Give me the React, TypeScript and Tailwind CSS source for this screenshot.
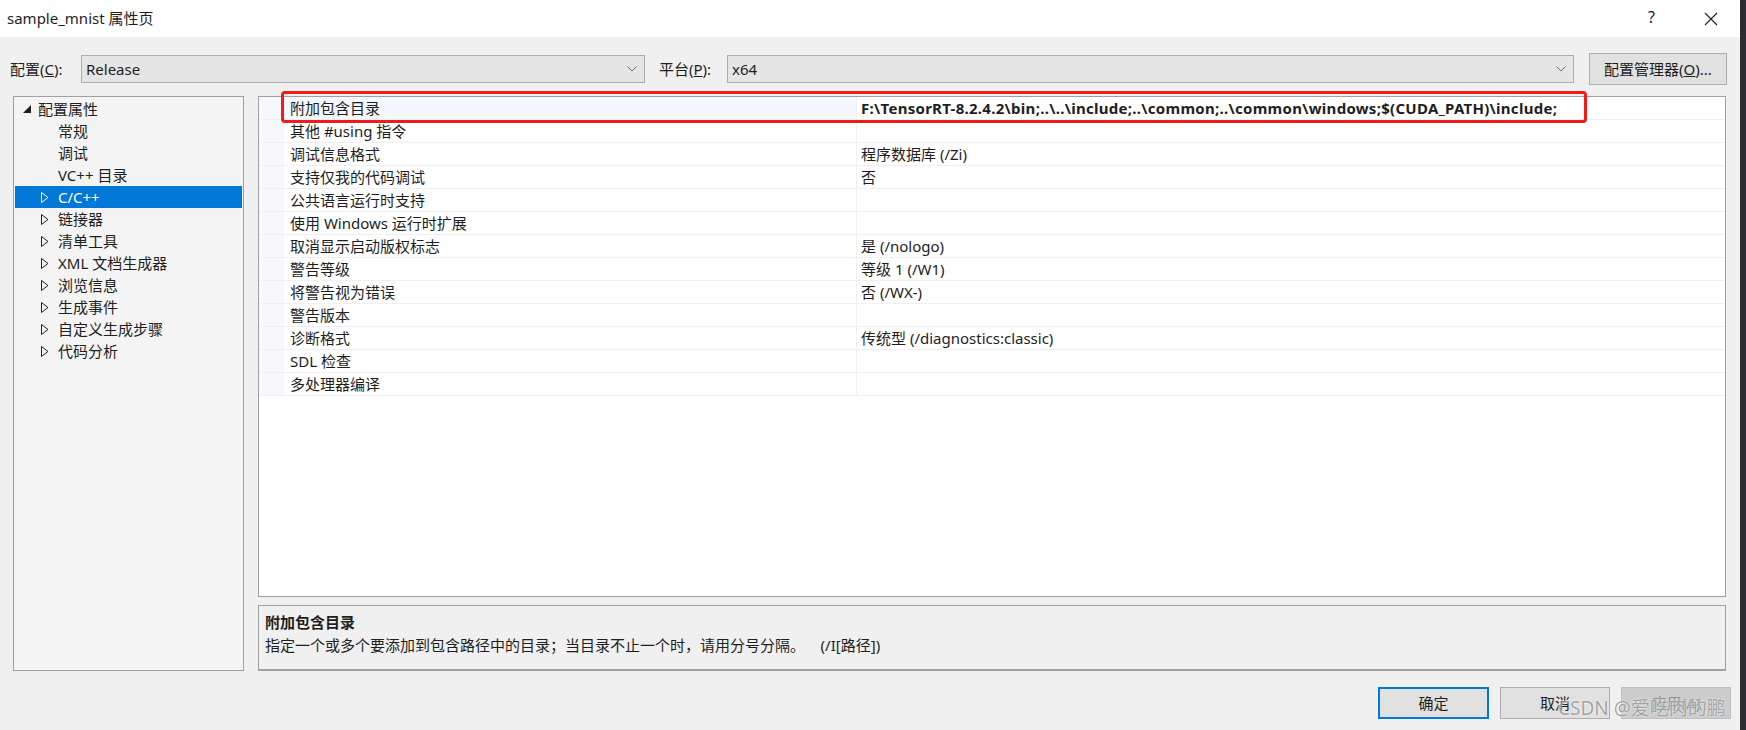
import React from "react"

const font = "font-['Noto_Sans','Noto_Sans_CJK_SC',sans-serif]"

type Prop = { name: string; value?: string }

const props: Prop[] = [
  { name: "附加包含目录", value: "F:\\TensorRT-8.2.4.2\\bin;..\\..\\include;..\\common;..\\common\\windows;$(CUDA_PATH)\\include;" },
  { name: "其他 #using 指令" },
  { name: "调试信息格式", value: "程序数据库 (/Zi)" },
  { name: "支持仅我的代码调试", value: "否" },
  { name: "公共语言运行时支持" },
  { name: "使用 Windows 运行时扩展" },
  { name: "取消显示启动版权标志", value: "是 (/nologo)" },
  { name: "警告等级", value: "等级 1 (/W1)" },
  { name: "将警告视为错误", value: "否 (/WX-)" },
  { name: "警告版本" },
  { name: "诊断格式", value: "传统型 (/diagnostics:classic)" },
  { name: "SDL 检查" },
  { name: "多处理器编译" },
]

const tree = [
  { label: "常规", kind: "leaf" },
  { label: "调试", kind: "leaf" },
  { label: "VC++ 目录", kind: "leaf" },
  { label: "C/C++", kind: "node", selected: true },
  { label: "链接器", kind: "node" },
  { label: "清单工具", kind: "node" },
  { label: "XML 文档生成器", kind: "node" },
  { label: "浏览信息", kind: "node" },
  { label: "生成事件", kind: "node" },
  { label: "自定义生成步骤", kind: "node" },
  { label: "代码分析", kind: "node" },
]

function Chevron() {
  return (
    <svg width="10" height="6" viewBox="0 0 10 6" className="shrink-0">
      <polyline points="0.5,0.5 5,5 9.5,0.5" fill="none" stroke="#6d6d6d" strokeWidth="1" />
    </svg>
  )
}

function Collapsed({ white }: { white?: boolean }) {
  return (
    <svg width="8" height="11" viewBox="0 0 8 11" className="shrink-0">
      <polygon points="0.5,0.5 7,5.5 0.5,10.5" fill="none" stroke={white ? "#ffffff" : "#1e1e1e"} strokeWidth="1" />
    </svg>
  )
}

function Dropdown({ text, width }: { text: string; width: string }) {
  return (
    <div className={`${width} h-[28px] bg-[#e5e5e5] border border-[#adadad] flex items-center justify-between pl-[4px] pr-[7px]`}>
      <span className="text-[15px] text-[#1e1e1e]">{text}</span>
      <Chevron />
    </div>
  )
}

export default function App() {
  return (
    <div className={`w-[1746px] h-[730px] flex overflow-hidden ${font} text-[#1e1e1e]`}>
      <div className="w-[1740px] h-full bg-[#f0f0f0] flex flex-col relative">
        {/* title bar */}
        <div className="h-[37px] bg-white flex items-center pl-[7px] relative">
          <span className="text-[15px] leading-none">sample_mnist 属性页</span>
          <span className="absolute left-[1648px] top-[9px] text-[16px] leading-none">?</span>
          <svg width="14" height="14" viewBox="0 0 14 14" className="absolute left-[1704px] top-[12px]">
            <path d="M1 1 L13 13 M13 1 L1 13" stroke="#1e1e1e" strokeWidth="1.1" />
          </svg>
        </div>

        {/* configuration bar */}
        <div className="mt-[16px] h-[32px] flex items-center pl-[10px]">
          <span className="text-[15px] w-[71px]">配置(<u>C</u>):</span>
          <Dropdown text="Release" width="w-[564px]" />
          <span className="text-[15px] ml-[14px] w-[68px]">平台(<u>P</u>):</span>
          <Dropdown text="x64" width="w-[847px]" />
          <div className="ml-[15px] w-[138px] h-[32px] bg-[#e1e1e1] border border-[#adadad] flex items-center justify-center text-[15px]">
            配置管理器(<u>O</u>)...
          </div>
        </div>

        {/* main area */}
        <div className="mt-[11px] h-[575px] flex pl-[13px] relative">
          <div className="w-[231px] h-full bg-[#f4f4f4] border border-[#a0a0a0] flex flex-col pt-[1px] pl-[1px] pr-[1px]">
            <div className="h-[22px] flex items-center text-[15px]">
              <svg width="8" height="8" viewBox="0 0 8 8" className="ml-[8px] mr-[7px]">
                <polygon points="8,0 8,8 0,8" fill="#1e1e1e" />
              </svg>
              <span>配置属性</span>
            </div>
            {tree.map((t) => (
              <div
                key={t.label}
                className={`h-[22px] flex items-center text-[15px] ${t.selected ? "bg-[#0078d7] text-white" : ""}`}
              >
                <span className="w-[38px] flex justify-end pr-[4px]">
                  {t.kind === "node" && <Collapsed white={t.selected} />}
                </span>
                <span className="ml-[5px]">{t.label}</span>
              </div>
            ))}
          </div>

          <div className="ml-[14px] w-[1468px] flex flex-col">
            <div className="h-[501px] bg-white border border-[#a0a0a0] flex flex-col">
              {props.map((p, i) => (
                <div key={p.name} className="h-[23px] flex border-b border-[#f0f0f0]">
                  <div className="w-[25px] bg-[#f6f8fb]" />
                  <div
                    className={`w-[573px] flex items-center pl-[6px] text-[15px] border-r border-[#f0f0f0] ${i === 0 ? "bg-[#f4f7fb]" : ""}`}
                  >
                    {p.name}
                  </div>
                  <div
                    className={`flex-1 flex items-center pl-[4px] text-[15px] whitespace-nowrap ${i === 0 ? "font-bold tracking-[0.28px]" : ""}`}
                  >
                    {p.value ?? ""}
                  </div>
                </div>
              ))}
              <div className="flex-1" />
            </div>

            <div className="mt-[8px] h-[66px] border border-[#a0a0a0] border-b-2 flex flex-col pl-[6px] pt-[5px]">
              <div className="text-[15px] font-bold leading-[22px]">附加包含目录</div>
              <div className="text-[15px] leading-[24px] whitespace-pre">
                指定一个或多个要添加到包含路径中的目录；当目录不止一个时，请用分号分隔。    (/I[路径])
              </div>
            </div>
          </div>

          {/* highlight box */}
          <div className="absolute left-[281px] top-[-5px] w-[1306px] h-[32px] border-[3px] border-[#ee1d1d] rounded-[4px]" />
        </div>

        {/* buttons */}
        <div className="mt-[16px] flex justify-end pr-[9px] gap-[11px]">
          <div className="w-[111px] h-[32px] bg-[#e1e1e1] border-2 border-[#0078d7] flex items-center justify-center text-[15px]">
            确定
          </div>
          <div className="w-[110px] h-[32px] bg-[#e1e1e1] border border-[#adadad] flex items-center justify-center text-[15px]">
            取消
          </div>
          <div className="w-[110px] h-[32px] bg-[#cccccc] border border-[#bfbfbf] flex items-center justify-center text-[15px] text-[#8c8c8c]">
            应用(A)
          </div>
        </div>

        <div className="absolute left-[1558px] top-[694px] text-[19px] leading-[28px] text-[#9a9a9a]/90 [text-shadow:0_0_2px_#ffffff] whitespace-nowrap">
          CSDN @爱吃肉的鹏
        </div>
      </div>
      <div className="w-[6px] h-full bg-[#2d2d30]" />
    </div>
  )
}
